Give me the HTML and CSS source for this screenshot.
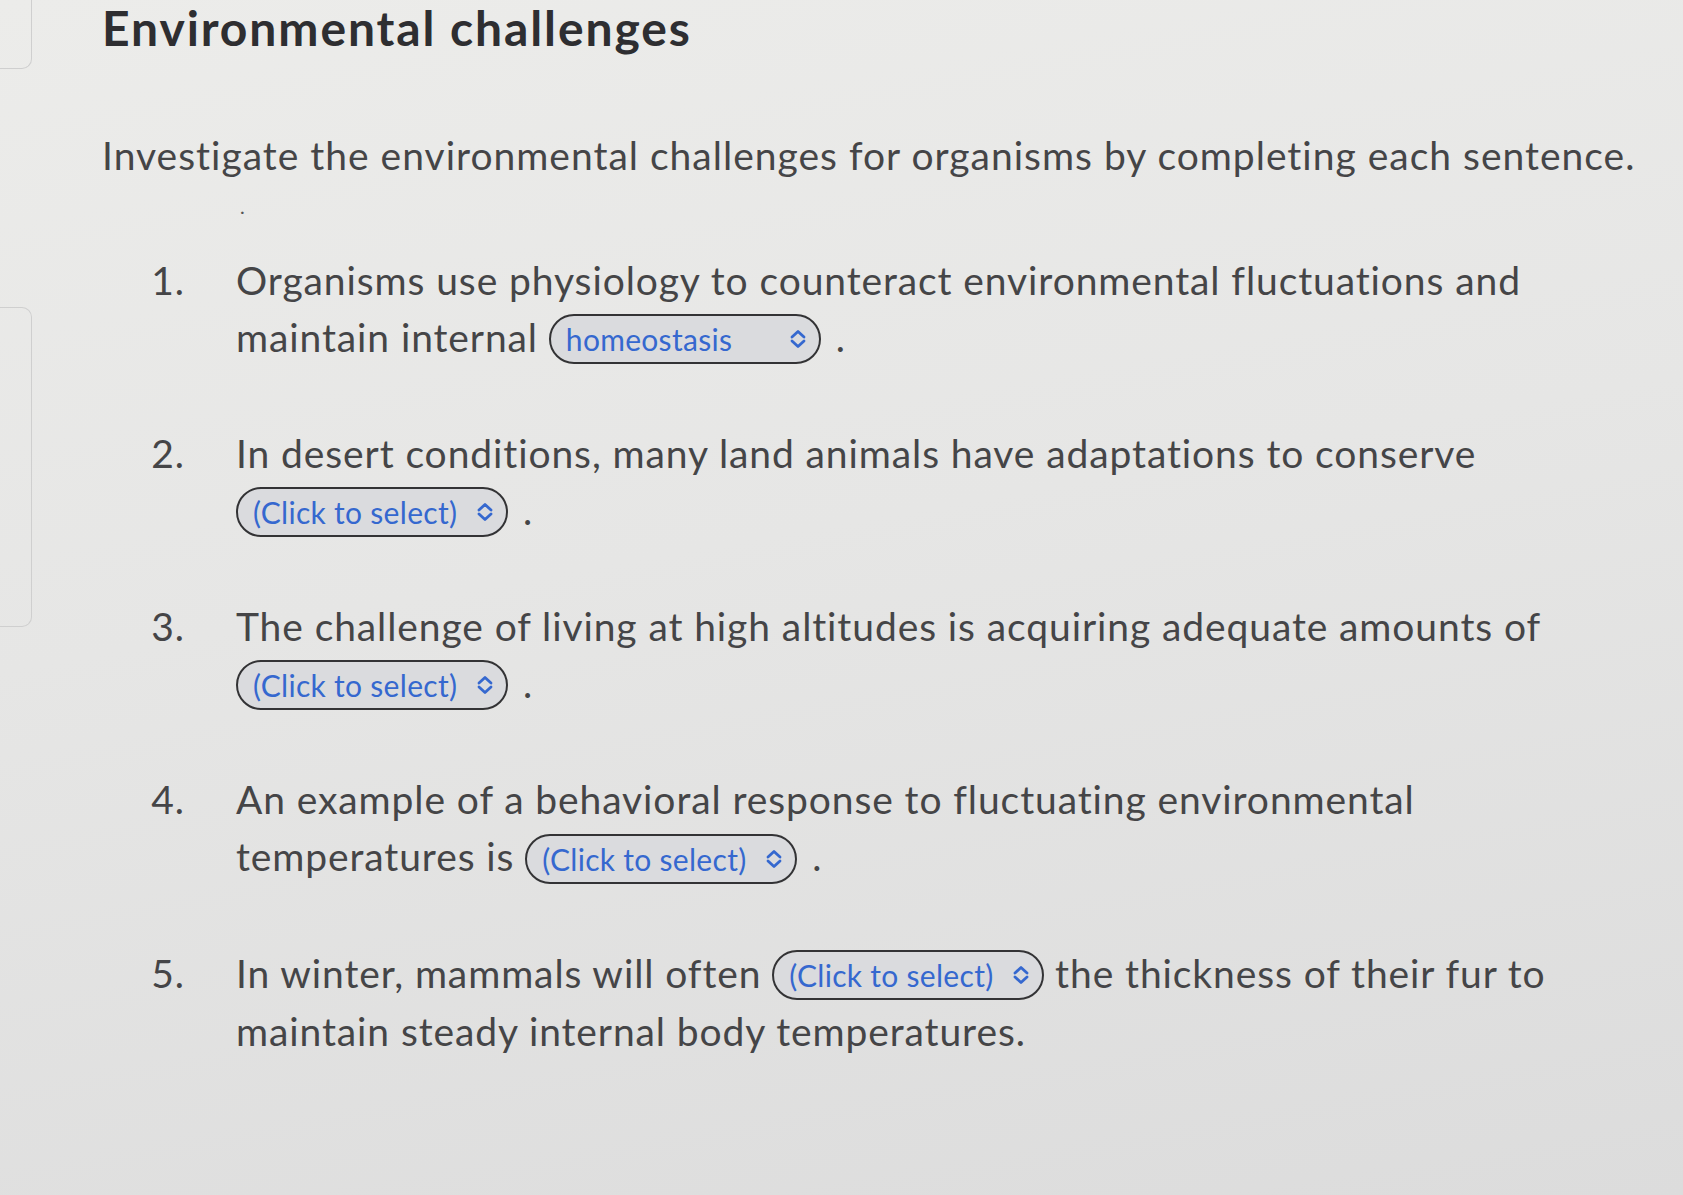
FILE: index.html
```html
<!DOCTYPE html>
<html lang="en">
<head>
<meta charset="utf-8">
<title>Environmental challenges</title>
<link rel="stylesheet" href="styles.css">
</head>
<body>
<div class="page">
  <aside class="rail">
    <div class="rail-box rail-top"></div>
    <div class="rail-box rail-mid"></div>
  </aside>
  <main class="content">
    <h1 class="title">Environmental challenges</h1>
    <p class="intro">Investigate the environmental challenges for organisms by completing each sentence.</p>
    <div class="stray">.</div>
    <ol class="items">
      <li class="item"><span class="num">1.</span><p class="text">Organisms use physiology to counteract environmental fluctuations and maintain internal <span class="select"><span class="sel-label">homeostasis</span><svg class="chev" viewBox="0 0 18 22" aria-hidden="true"><path d="M3 9 L9 3.5 L15 9 M3 13 L9 18.5 L15 13"/></svg></span> <span class="dot">.</span></p></li>
      <li class="item"><span class="num">2.</span><p class="text">In desert conditions, many land animals have adaptations to conserve <span class="select"><span class="sel-label">(Click to select)</span><svg class="chev" viewBox="0 0 18 22" aria-hidden="true"><path d="M3 9 L9 3.5 L15 9 M3 13 L9 18.5 L15 13"/></svg></span> <span class="dot">.</span></p></li>
      <li class="item"><span class="num">3.</span><p class="text">The challenge of living at high altitudes is acquiring adequate amounts of <span class="select"><span class="sel-label">(Click to select)</span><svg class="chev" viewBox="0 0 18 22" aria-hidden="true"><path d="M3 9 L9 3.5 L15 9 M3 13 L9 18.5 L15 13"/></svg></span> <span class="dot">.</span></p></li>
      <li class="item"><span class="num">4.</span><p class="text">An example of a behavioral response to fluctuating environmental temperatures is <span class="select"><span class="sel-label">(Click to select)</span><svg class="chev" viewBox="0 0 18 22" aria-hidden="true"><path d="M3 9 L9 3.5 L15 9 M3 13 L9 18.5 L15 13"/></svg></span> <span class="dot">.</span></p></li>
      <li class="item"><span class="num">5.</span><p class="text">In winter, mammals will often <span class="select"><span class="sel-label">(Click to select)</span><svg class="chev" viewBox="0 0 18 22" aria-hidden="true"><path d="M3 9 L9 3.5 L15 9 M3 13 L9 18.5 L15 13"/></svg></span> the thickness of their fur to maintain steady internal body temperatures.</p></li>
    </ol>
  </main>
</div>
</body>
</html>
```

FILE: styles.css
```css
html, body {
  margin: 0;
  padding: 0;
}

body {
  width: 1683px;
  height: 1195px;
  overflow: hidden;
  background: linear-gradient(170deg, #ececea 0%, #e6e6e5 45%, #dcdcdc 100%);
  font-family: Lato, "Liberation Sans", sans-serif;
  color: #454547;
}

.page {
  display: flex;
  height: 100%;
}

.rail {
  width: 32px;
  flex: none;
  display: flex;
  flex-direction: column;
}

.rail-box {
  border: 1px solid #cfcfcf;
  border-left: none;
  border-radius: 0 10px 10px 0;
}

.rail-top {
  height: 68px;
  border-top: none;
  border-radius: 0 0 10px 0;
}

.rail-mid {
  margin-top: 238px;
  height: 318px;
}

.content {
  padding-left: 70px;
  flex: 1;
}

.title {
  margin: 0;
  font-size: 48px;
  line-height: 56px;
  font-weight: 700;
  letter-spacing: 1.9px;
  color: #2e2e31;
}

.intro {
  margin: 71px 0 0;
  font-size: 39px;
  line-height: 57px;
  letter-spacing: 1px;
  white-space: nowrap;
}

.stray {
  height: 68px;
  padding-left: 138px;
  font-size: 20px;
  line-height: 44px;
  color: #555;
}

.items {
  list-style: none;
  margin: 0;
  padding: 0;
  display: flex;
  flex-direction: column;
  gap: 58px;
}

.item {
  display: flex;
}

.num {
  flex: none;
  width: 83px;
  margin-right: 51px;
  text-align: right;
  font-size: 39px;
  line-height: 57px;
  letter-spacing: 1px;
}

.text {
  margin: 0;
  font-size: 39px;
  line-height: 57px;
  letter-spacing: 0.9px;
  max-width: 1330px;
}

.select {
  display: inline-flex;
  align-items: center;
  justify-content: space-between;
  box-sizing: border-box;
  width: 272px;
  height: 50px;
  padding: 0 12px 0 15px;
  border: 2.5px solid #333335;
  border-radius: 25px;
  background: #dadbde;
  vertical-align: middle;
  position: relative;
  top: -3px;
  color: #3568cf;
  font-size: 30px;
  letter-spacing: 0.3px;
  line-height: 1;
}

.sel-label {
  white-space: nowrap;
}

.chev {
  flex: none;
  width: 18px;
  height: 22px;
  fill: none;
  stroke: #3568cf;
  stroke-width: 2.8;
  stroke-linecap: round;
  stroke-linejoin: round;
}

.dot {
  margin-left: 4px;
}
```
